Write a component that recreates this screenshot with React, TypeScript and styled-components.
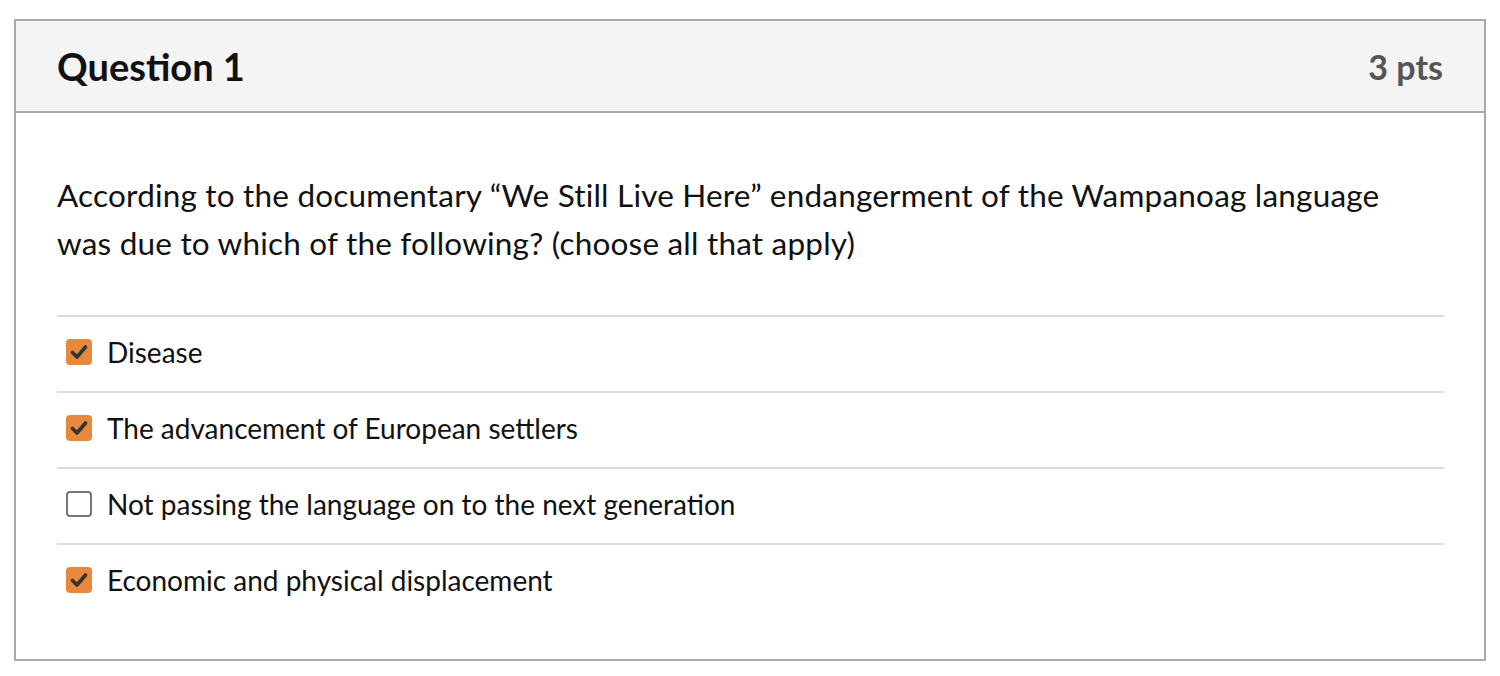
import styled, { createGlobalStyle } from 'styled-components';

const GlobalStyle = createGlobalStyle`
	html, body {
		margin: 0;
		padding: 0;
		background: #ffffff;
		font-family: Lato, 'Noto Sans', sans-serif;
		color: #111111;
	}
`;

type Answer = {
	text: string;
	checked: boolean;
};

const answers: Answer[] = [
	{ text: 'Disease', checked: true },
	{ text: 'The advancement of European settlers', checked: true },
	{ text: 'Not passing the language on to the next generation', checked: false },
	{ text: 'Economic and physical displacement', checked: true },
];

const CheckMark = () => (
	<svg width='22' height='22' viewBox='0 0 22 22'>
		<path d='M4.5 11.5 L9 16 L17.5 6' fill='none' stroke='#333' strokeWidth='3.6' strokeLinecap='round' strokeLinejoin='round' />
	</svg>
);

const App = () => {
	return (
		<>
			<GlobalStyle />
			<Page>
				<QuestionCard>
					<Header>
						<Title>Question 1</Title>
						<Points>3 pts</Points>
					</Header>
					<Body>
						<Prompt>
							According to the documentary “We Still Live Here” endangerment of the Wampanoag language
							was due to which of the following? (choose all that apply)
						</Prompt>
						<AnswerList>
							{answers.map((a) => (
								<AnswerRow key={a.text}>
									<CheckBox checked={a.checked}>{a.checked && <CheckMark />}</CheckBox>
									<AnswerText>{a.text}</AnswerText>
								</AnswerRow>
							))}
						</AnswerList>
					</Body>
				</QuestionCard>
			</Page>
		</>
	);
};

export default App;

const Page = styled.div`
	padding: 19px 14px 0 14px;
`;

const QuestionCard = styled.div`
	border: 2px solid #a9a9a9;
	background: #fff;
	height: 642px;
	box-sizing: border-box;
`;

const Header = styled.div`
	height: 92px;
	box-sizing: border-box;
	background: #f4f4f4;
	border-bottom: 2px solid #a9a9a9;
	display: flex;
	align-items: center;
	justify-content: space-between;
	padding: 0 41px 0 41px;
`;

const Title = styled.div`
	font-size: 38px;
	font-weight: 700;
	color: #111;
`;

const Points = styled.div`
	font-size: 34px;
	font-weight: 700;
	color: #555;
`;

const Body = styled.div`
	padding: 58px 40px 0 41px;
`;

const Prompt = styled.p`
	margin: 0;
	max-width: 1360px;
	font-size: 31.5px;
	line-height: 48px;
	letter-spacing: 0.2px;
	color: #111;
`;

const AnswerList = styled.div`
	margin-top: 48px;
`;

const AnswerRow = styled.div`
	display: flex;
	align-items: center;
	height: 76px;
	box-sizing: border-box;
	border-top: 2px solid #dcdcdc;
	padding: 0 0 4px 9px;
`;

const CheckBox = styled.span<{ checked: boolean }>`
	width: 26px;
	height: 26px;
	box-sizing: border-box;
	border-radius: 4px;
	display: flex;
	align-items: center;
	justify-content: center;
	margin-right: 15px;
	background: ${(p) => (p.checked ? '#e8883d' : '#fff')};
	border: ${(p) => (p.checked ? 'none' : '2px solid #767676')};
`;

const AnswerText = styled.span`
	font-size: 28px;
	color: #111;
`;
